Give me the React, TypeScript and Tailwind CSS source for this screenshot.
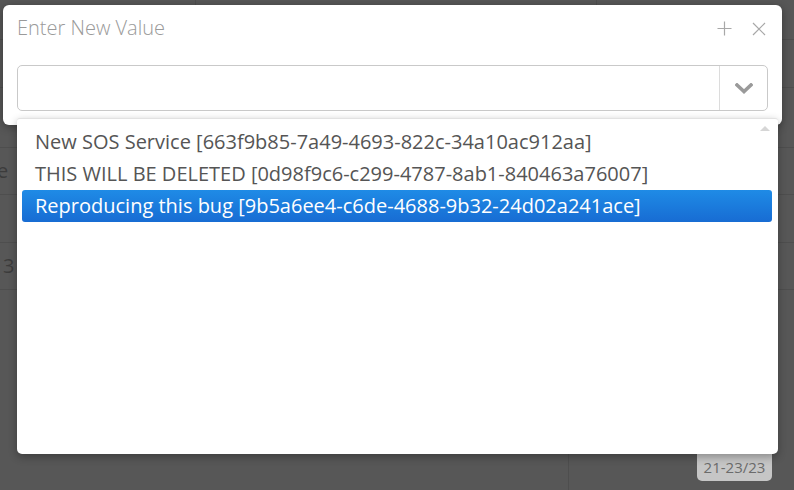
import React from "react";

const items = [
  "New SOS Service [663f9b85-7a49-4693-822c-34a10ac912aa]",
  "THIS WILL BE DELETED [0d98f9c6-c299-4787-8ab1-840463a76007]",
  "Reproducing this bug [9b5a6ee4-c6de-4688-9b32-24d02a241ace]",
];

export default function App() {
  return (
    <div
      className="relative w-[794px] h-[490px] overflow-hidden bg-[#575757]"
      style={{ fontFamily: '"Open Sans", "Noto Sans", sans-serif' }}
    >
      {/* dimmed background table */}
      <div className="flex flex-col w-full h-full">
        <div className="h-[40px] border-b border-[#4e4e4e] flex">
          <div className="w-[196px] border-r border-[#4e4e4e]" />
          <div className="w-[401px] border-r border-[#4e4e4e]" />
        </div>
        <div className="h-[48px] border-b border-[#4e4e4e]" />
        <div className="h-[60px] border-b border-[#4e4e4e]" />
        <div className="h-[47px] border-b border-[#4e4e4e] flex items-center text-[20px] text-[#3c3c3c] -ml-[3px]">
          e
        </div>
        <div className="h-[48px] border-b border-[#4e4e4e]" />
        <div className="h-[47px] border-b border-[#4e4e4e] flex items-center text-[20px] text-[#3c3c3c] pl-[3px]">
          3
        </div>
        <div className="flex-1 flex">
          <div className="w-[569px] border-r border-[#4e4e4e]" />
        </div>
      </div>

      {/* count badge */}
      <div className="absolute left-[697px] top-[450px] w-[75px] h-[31px] pt-[3px] bg-[#c6c6c6] rounded-b-[5px] flex items-center justify-center text-[15px] text-[#6b6b6b]">
        21-23/23
      </div>

      {/* dialog */}
      <div className="absolute left-[3px] top-[5px] w-[779px] h-[120px] bg-white rounded-[6px] shadow-[0_2px_8px_rgba(0,0,0,0.35)]">
        <div className="flex items-center justify-between pl-[14px] pr-[16px] pt-[9px]">
          <div className="text-[20px] font-light text-[#9a9a9a] leading-[28px]">Enter New Value</div>
          <div className="flex items-center gap-[20px] pt-[1px]">
            <svg width="15" height="15" viewBox="0 0 15 15">
              <path d="M7.5 0.5 V14.5 M0.5 7.5 H14.5" stroke="#a8a8a8" strokeWidth="1.2" fill="none" />
            </svg>
            <svg width="14" height="14" viewBox="0 0 14 14">
              <path d="M1 1 L13 13 M13 1 L1 13" stroke="#a8a8a8" strokeWidth="1.2" fill="none" />
            </svg>
          </div>
        </div>
        <div className="mx-[14px] mt-[23px] h-[46px] border border-[#c9c9c9] rounded-[5px] flex">
          <div className="flex-1" />
          <div className="w-[48px] border-l border-[#dcdcdc] flex items-center justify-center">
            <svg width="18" height="11" viewBox="0 0 18 11">
              <path d="M2 2 L9 8.5 L16 2" stroke="#9a9a9a" strokeWidth="3.6" fill="none" strokeLinecap="square" />
            </svg>
          </div>
        </div>
      </div>

      {/* dropdown list */}
      <div className="absolute left-[17px] top-[118px] w-[761px] h-[336px] bg-white border-t border-[#e2e2e2] rounded-t-[3px] rounded-b-[5px] shadow-[0_3px_8px_rgba(0,0,0,0.3)]">
        <div className="relative pt-[7px] px-[5px] flex flex-col">
          <div className="absolute right-[8px] top-[7px] w-0 h-0 border-l-[5px] border-r-[5px] border-b-[5px] border-l-transparent border-r-transparent border-b-[#d6d6d6]" />
          {items.map((t, i) => (
            <div
              key={i}
              className={
                i === 2
                  ? "h-[32px] flex items-center pl-[13px] text-[20px] text-white rounded-[3px] bg-gradient-to-b from-[#1f8be6] to-[#186cd3] w-[750px]"
                  : "h-[32px] flex items-center pl-[13px] text-[20px] text-[#555555]"
              }
            >
              {t}
            </div>
          ))}
        </div>
      </div>
    </div>
  );
}
